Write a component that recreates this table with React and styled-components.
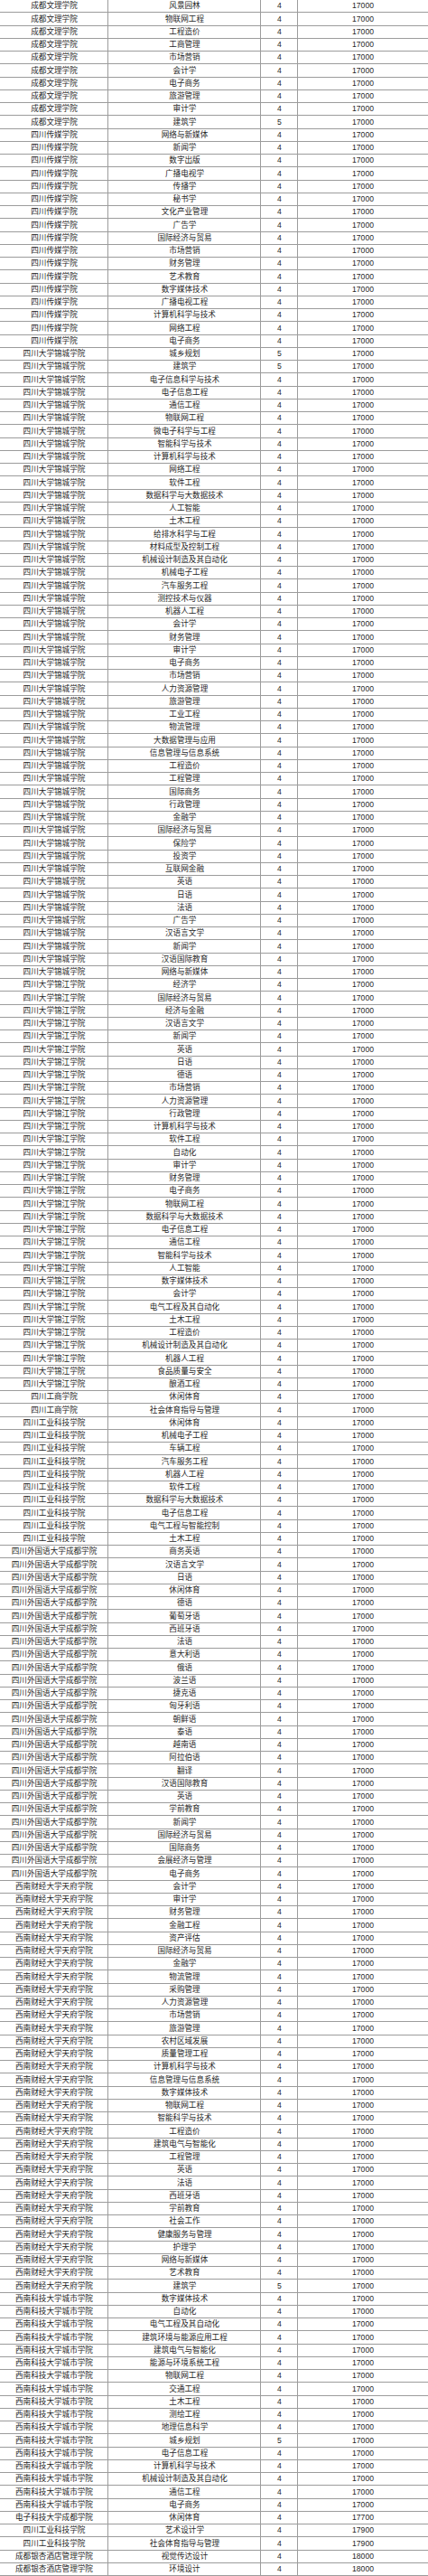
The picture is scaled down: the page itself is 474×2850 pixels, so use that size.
import React from "react";
import styled, { createGlobalStyle } from "styled-components";

const GlobalStyle = createGlobalStyle`
  html, body {
    margin: 0;
    padding: 0;
    background: #ffffff;
  }
  body {
    font-family: "Liberation Sans", "Noto Sans CJK SC", sans-serif;
  }
`;

// [学校, [专业, 学制, 学费] ...]
const groups = [
  ["成都文理学院", ["风景园林", "物联网工程", "工程造价", "工商管理", "市场营销", "会计学", "电子商务", "旅游管理", "审计学", ["建筑学", 5]]],
  ["四川传媒学院", ["网络与新媒体", "新闻学", "数字出版", "广播电视学", "传播学", "秘书学", "文化产业管理", "广告学", "国际经济与贸易", "市场营销", "财务管理", "艺术教育", "数字媒体技术", "广播电视工程", "计算机科学与技术", "网络工程", "电子商务"]],
  ["四川大学锦城学院", [["城乡规划", 5], ["建筑学", 5], "电子信息科学与技术", "电子信息工程", "通信工程", "物联网工程", "微电子科学与工程", "智能科学与技术", "计算机科学与技术", "网络工程", "软件工程", "数据科学与大数据技术", "人工智能", "土木工程", "给排水科学与工程", "材料成型及控制工程", "机械设计制造及其自动化", "机械电子工程", "汽车服务工程", "测控技术与仪器", "机器人工程", "会计学", "财务管理", "审计学", "电子商务", "市场营销", "人力资源管理", "旅游管理", "工业工程", "物流管理", "大数据管理与应用", "信息管理与信息系统", "工程造价", "工程管理", "国际商务", "行政管理", "金融学", "国际经济与贸易", "保险学", "投资学", "互联网金融", "英语", "日语", "法语", "广告学", "汉语言文学", "新闻学", "汉语国际教育", "网络与新媒体"]],
  ["四川大学锦江学院", ["经济学", "国际经济与贸易", "经济与金融", "汉语言文学", "新闻学", "英语", "日语", "德语", "市场营销", "人力资源管理", "行政管理", "计算机科学与技术", "软件工程", "自动化", "审计学", "财务管理", "电子商务", "物联网工程", "数据科学与大数据技术", "电子信息工程", "通信工程", "智能科学与技术", "人工智能", "数字媒体技术", "会计学", "电气工程及其自动化", "土木工程", "工程造价", "机械设计制造及其自动化", "机器人工程", "食品质量与安全", "酿酒工程"]],
  ["四川工商学院", ["休闲体育", "社会体育指导与管理"]],
  ["四川工业科技学院", ["休闲体育", "机械电子工程", "车辆工程", "汽车服务工程", "机器人工程", "软件工程", "数据科学与大数据技术", "电子信息工程", "电气工程与智能控制", "土木工程"]],
  ["四川外国语大学成都学院", ["商务英语", "汉语言文学", "日语", "休闲体育", "德语", "葡萄牙语", "西班牙语", "法语", "意大利语", "俄语", "波兰语", "捷克语", "匈牙利语", "朝鲜语", "泰语", "越南语", "阿拉伯语", "翻译", "汉语国际教育", "英语", "学前教育", "新闻学", "国际经济与贸易", "国际商务", "会展经济与管理", "电子商务"]],
  ["西南财经大学天府学院", ["会计学", "审计学", "财务管理", "金融工程", "资产评估", "国际经济与贸易", "金融学", "物流管理", "采购管理", "人力资源管理", "市场营销", "旅游管理", "农村区域发展", "质量管理工程", "计算机科学与技术", "信息管理与信息系统", "数字媒体技术", "物联网工程", "智能科学与技术", "工程造价", "建筑电气与智能化", "工程管理", "英语", "法语", "西班牙语", "学前教育", "社会工作", "健康服务与管理", "护理学", "网络与新媒体", "艺术教育", ["建筑学", 5]]],
  ["西南科技大学城市学院", ["数字媒体技术", "自动化", "电气工程及其自动化", "建筑环境与能源应用工程", "建筑电气与智能化", "能源与环境系统工程", "物联网工程", "交通工程", "土木工程", "测绘工程", "地理信息科学", ["城乡规划", 5], "电子信息工程", "计算机科学与技术", "机械设计制造及其自动化", "通信工程", "电子商务"]],
  ["电子科技大学成都学院", [["休闲体育", 4, 17700]]],
  ["四川工业科技学院", [["艺术设计学", 4, 17900], ["社会体育指导与管理", 4, 17900]]],
  ["成都银杏酒店管理学院", [["视觉传达设计", 4, 18000], ["环境设计", 4, 18000]]],
];

const rows = groups.flatMap(([school, majors]) =>
  majors.map((m) => {
    const [major, years = 4, fee = 17000] = Array.isArray(m) ? m : [m];
    return { school, major, years, fee };
  })
);

const Table = styled.div`
  width: 474px;
  display: flex;
  flex-direction: column;
  color: #262626;
  font-size: 8.6px;
`;

const Row = styled.div`
  display: grid;
  grid-template-columns: 120px 169px 41px 1fr;
  height: 14.25px;
  box-sizing: border-box;
  border-bottom: 1px solid #9c9c9c;
`;

const Cell = styled.div`
  display: flex;
  align-items: center;
  justify-content: center;
  white-space: nowrap;
  line-height: 1;
  border-left: ${(p) => (p.$first ? "none" : "1px solid #9c9c9c")};
  margin-left: ${(p) => (p.$first ? "0" : "-1px")};
`;

export default function App() {
  return (
    <>
      <GlobalStyle />
      <Table>
        {rows.map((r, i) => (
          <Row key={i}>
            <Cell $first>{r.school}</Cell>
            <Cell>{r.major}</Cell>
            <Cell>{r.years}</Cell>
            <Cell>{r.fee}</Cell>
          </Row>
        ))}
      </Table>
    </>
  );
}
